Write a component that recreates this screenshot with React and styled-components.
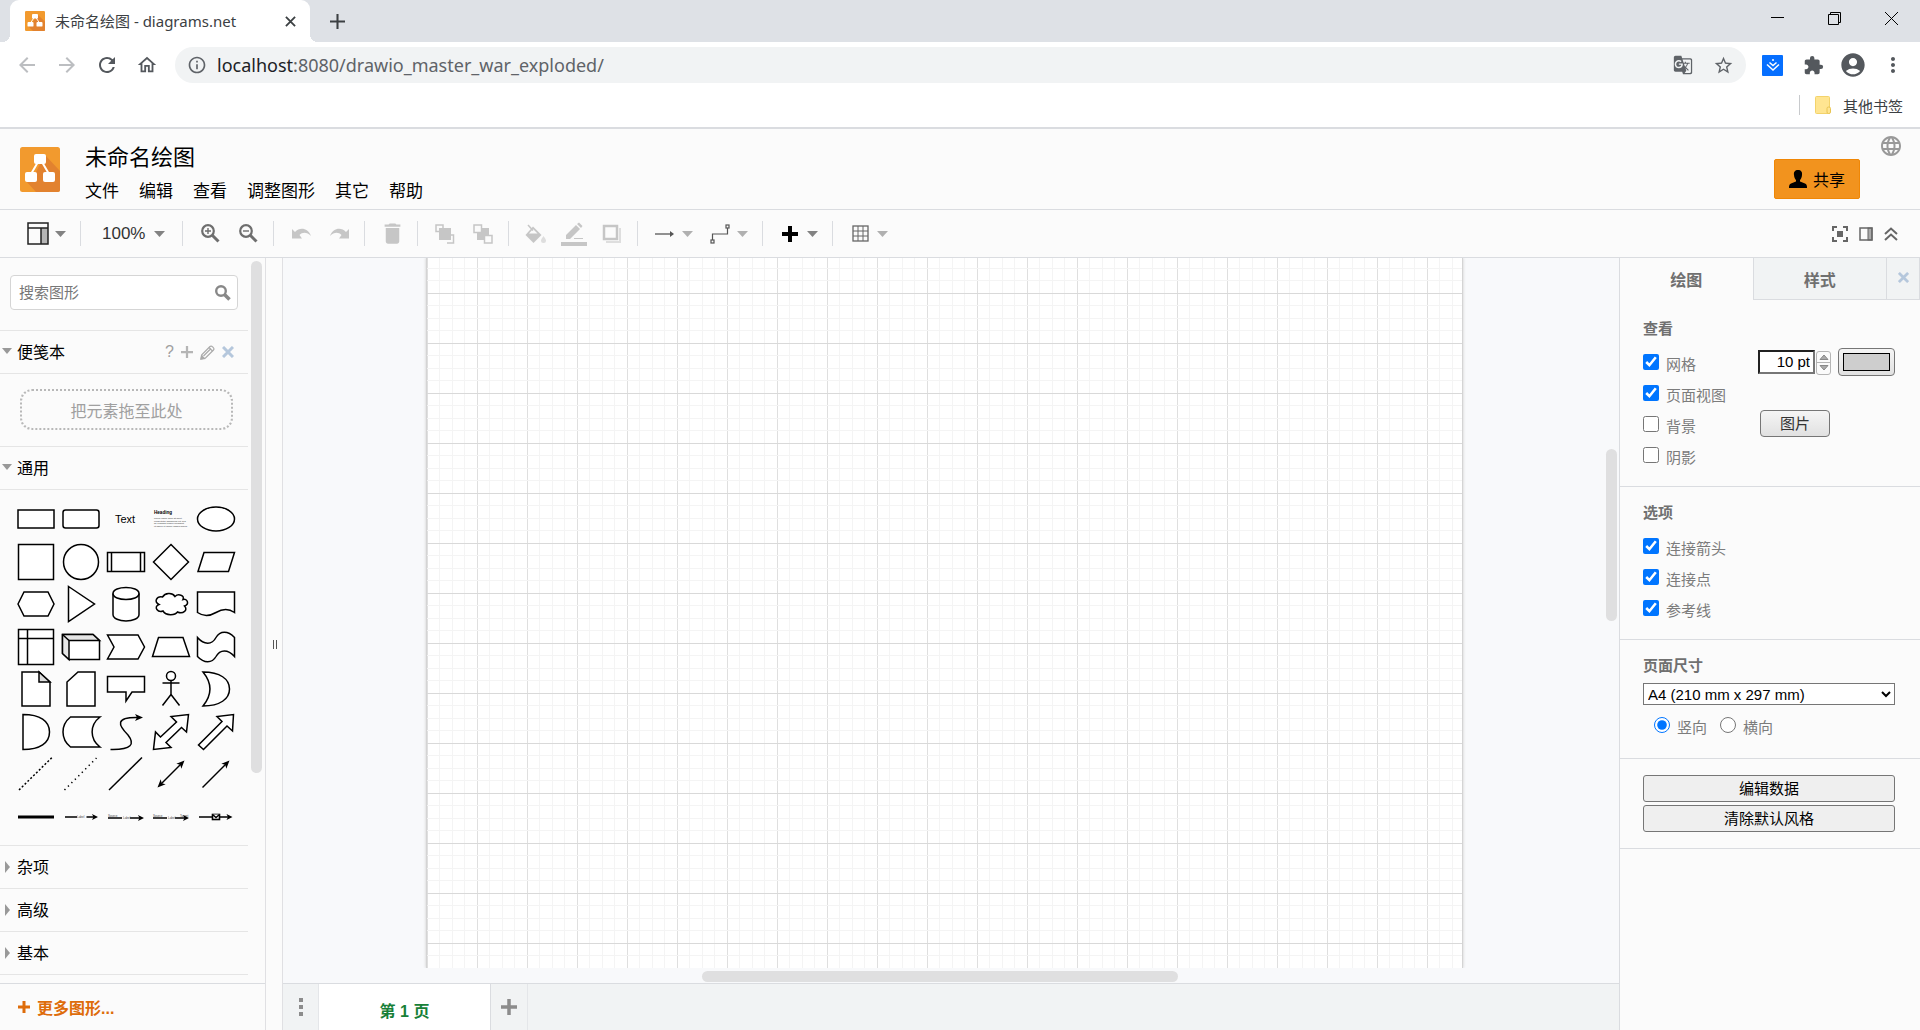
import React from "react";
import styled, { createGlobalStyle, css } from "styled-components";
import {
  MdAccountCircle,
  MdArrowBack,
  MdArrowForward,
  MdDelete,
  MdExtension,
  MdGTranslate,
  MdInfoOutline,
  MdLanguage,
  MdMoreVert,
  MdOutlineHome,
  MdRefresh,
  MdStarBorder,
} from "react-icons/md";

const GlobalStyle = createGlobalStyle`
  * {
    box-sizing: border-box;
  }

  body {
    margin: 0;
    font-family: "Liberation Sans", "Noto Sans CJK SC", sans-serif;
    font-size: 15px;
    color: #000;
  }

  button, input, select {
    font-family: inherit;
    margin: 0;
  }

  button {
    padding: 0;
    border: none;
    background: none;
    color: inherit;
  }
`;

const menus = ["文件", "编辑", "查看", "调整图形", "其它", "帮助"];

const viewOptions = [
  { id: "grid", label: "网格", checked: true },
  { id: "pageView", label: "页面视图", checked: true },
  { id: "background", label: "背景", checked: false },
  { id: "shadow", label: "阴影", checked: false },
];

const options = [
  { id: "arrows", label: "连接箭头" },
  { id: "points", label: "连接点" },
  { id: "guides", label: "参考线" },
];

const Head = ({ x, y, angle = 0 }) => (
  <path
    d="M0 0L-8 -3.5L-6 0L-8 3.5Z"
    transform={`translate(${x} ${y}) rotate(${angle})`}
    fill="#000"
    stroke="none"
  />
);

const SmallHead = ({ x, y, angle = 0 }) => (
  <path
    d="M0 0L-6 -3L-4.5 0L-6 3Z"
    transform={`translate(${x} ${y}) rotate(${angle})`}
    fill="#000"
    stroke="none"
  />
);

const Tiny = ({ x, y, children }) => (
  <text x={x} y={y} fontSize="3" fill="#444" stroke="none">
    {children}
  </text>
);

// every shape is drawn around 0,0 in a 44x42 cell
const shapes = [
  { name: "rectangle", art: <rect x="-18" y="-9" width="36" height="18" /> },
  { name: "rounded", art: <rect x="-18" y="-9" width="36" height="18" rx="2.5" /> },
  {
    name: "text",
    art: (
      <text x="-1" y="4" fontSize="11" textAnchor="middle" fill="#000" stroke="none">
        Text
      </text>
    ),
  },
  {
    name: "textbox",
    art: (
      <g stroke="none" fill="#000">
        <text x="-17" y="-5" fontSize="4.6" fontWeight="bold">Heading</text>
        <g fontSize="2.3" fill="#333">
          <text x="-17" y="0">Lorem ipsum dolor sit amet,</text>
          <text x="-17" y="2.7">consectetur adipisicing elit, sed</text>
          <text x="-17" y="5.4">do eiusmod tempor incididunt</text>
          <text x="-17" y="8.1">ut labore et dolore magna aliqua.</text>
        </g>
      </g>
    ),
  },
  { name: "ellipse", art: <ellipse rx="18.5" ry="12" /> },
  { name: "square", art: <rect x="-17.5" y="-17.5" width="35" height="35" /> },
  { name: "circle", art: <circle r="17.5" /> },
  {
    name: "process",
    art: (
      <>
        <rect x="-18.5" y="-9.5" width="37" height="19" />
        <path d="M-14.5 -9.5V9.5M14.5 -9.5V9.5" />
      </>
    ),
  },
  { name: "diamond", art: <path d="M0 -17.5L17.5 0L0 17.5L-17.5 0Z" /> },
  { name: "parallelogram", art: <path d="M-18 9.5L-12 -9.5H18.5L12.5 9.5Z" /> },
  { name: "hexagon", art: <path d="M-18 0L-12 -12H12L18 0L12 12H-12Z" /> },
  { name: "triangle", art: <path d="M-12.5 -17.5L13.5 0L-12.5 17.5Z" /> },
  {
    name: "cylinder",
    art: (
      <>
        <path d="M-13 -10.5V10.5C-13 19 13 19 13 10.5V-10.5C13 -18.5 -13 -18.5 -13 -10.5Z" />
        <path d="M-13 -10.5C-13 -2.5 13 -2.5 13 -10.5" fill="none" />
      </>
    ),
  },
  {
    name: "cloud",
    art: (
      <path d="M-8.5 -7C-14.5 -8 -17.5 -2 -12 0.5C-18 3 -13 9 -8 7C-5 12 4 11.5 6.5 8C12 10.5 17.5 6 13.5 2C19 0 16 -6 12 -4.5C14 -9 7 -10.5 4 -7.5C1 -12 -6 -11 -8.5 -7Z" />
    ),
  },
  {
    name: "document",
    art: <path d="M-18.5 -12H18.5V8.5C12 4 6 5 0 8.500C-6 12 -12 13 -18.5 8.5Z" />,
  },
  {
    name: "internal storage",
    art: (
      <>
        <rect x="-17.5" y="-17.5" width="35" height="35" />
        <path d="M-8.5 -17.5V17.5M-17.5 -8.5H17.5" />
      </>
    ),
  },
  {
    name: "cube",
    art: (
      <>
        <path d="M-18.5 -12.5H12L18.5 -6.5V12.5H-12L-18.5 6.5Z" />
        <path d="M-18.5 -12.5H12L18.5 -6.5H-12V12.5L-18.5 6.5Z" fill="#e6e6e6" />
        <path d="M-18.5 -12.5L-12 -6.5" />
      </>
    ),
  },
  { name: "step", art: <path d="M-18.5 -12H12L18.5 0L12 12H-18.5L-12 0Z" /> },
  { name: "trapezoid", art: <path d="M-18.5 9.5L-12.5 -9.5H12L18.5 9.5Z" /> },
  {
    name: "tape",
    art: (
      <path d="M-18.5 -9.5C-12 -2 -4 -2 0 -9.5C4 -16.5 12 -16.5 18.5 -9.5V9.5C12 2 4 2 0 9.5C-4 16.5 -12 16.5 -18.5 9.5Z" />
    ),
  },
  {
    name: "note",
    art: (
      <>
        <path d="M-14 -17H3L14 -7V17H-14Z" />
        <path d="M3 -17V-7H14Z" fill="#ddd" />
      </>
    ),
  },
  { name: "card", art: <path d="M-3 -17H14V17H-14V-7Z" /> },
  { name: "callout", art: <path d="M-18.5 -12.5H18.5V3H6L0 12V3H-18.5Z" /> },
  {
    name: "actor",
    art: (
      <>
        <circle cy="-13" r="4.5" />
        <path d="M0 -8.5V5.5M-8.5 -6H8.5M0 5.5L-8.5 16.5M0 5.5L8.5 16.5" />
      </>
    ),
  },
  {
    name: "or",
    art: <path d="M-13 -17C4 -17 13.5 -10 13.5 0C13.5 10 4 17 -13 17C-4 6 -4 -6 -13 -17Z" />,
  },
  { name: "and", art: <path d="M-13 -17.5C4 -17.5 13.5 -11 13.5 0C13.5 11 4 17.5 -13 17.5Z" /> },
  {
    name: "data storage",
    art: <path d="M-10.5 -15H19C8.5 -7 8.5 7 19 15H-10.5C-20.5 7 -20.5 -7 -10.5 -15Z" />,
  },
  {
    name: "curve",
    art: (
      <>
        <path d="M-15.5 17.5C6 18 9 12 2 3C-8 -7 -11 -15 12 -14.5" fill="none" />
        <Head x={17} y={-14.5} />
      </>
    ),
  },
  {
    name: "bidirectional arrow",
    art: (
      <path d="M17.5 -17.5L15.5 0L10.5 -4.5L-5 10.5L0 15.5L-17.5 17.5L-15.5 0L-10.5 5L5.5 -10L0 -15.5Z" />
    ),
  },
  {
    name: "arrow",
    art: <path d="M17.5 -17.5L16.5 -1L11 -6L-12.5 17.5L-17.5 13L6 -10.5L1 -15.5Z" />,
  },
  { name: "dashed line", art: <path d="M-17 16L16 -16.5" strokeDasharray="2 2" /> },
  { name: "dotted line", art: <path d="M-16.5 16L15.5 -16" strokeDasharray="1.3 3.6" /> },
  { name: "line", art: <path d="M-17 16L16 -16.5" /> },
  {
    name: "bidirectional connector",
    art: (
      <>
        <path d="M-10 10L10 -10" />
        <Head x={13.5} y={-13.5} angle={-45} />
        <Head x={-13.5} y={13.5} angle={135} />
      </>
    ),
  },
  {
    name: "directional connector",
    art: (
      <>
        <path d="M-13.5 13.5L10 -10" />
        <Head x={13.5} y={-13.5} angle={-45} />
      </>
    ),
  },
  { name: "link", art: <path d="M-18 0H18" strokeWidth="3" /> },
  {
    name: "connector with label",
    art: (
      <>
        <path d="M-16 0H-4M5.5 0H13" />
        <Tiny x={-4} y={1}>Label</Tiny>
        <SmallHead x={17} y={0} />
      </>
    ),
  },
  {
    name: "connector with 2 labels",
    art: (
      <>
        <path d="M-18 1H-4M4 1H14" />
        <Tiny x={-18} y={0}>Source</Tiny>
        <Tiny x={-3} y={2}>Label</Tiny>
        <SmallHead x={18} y={1} />
      </>
    ),
  },
  {
    name: "connector with 3 labels",
    art: (
      <>
        <path d="M-18 1H-4M4 1H14" />
        <Tiny x={-18} y={0}>Source</Tiny>
        <Tiny x={-3} y={2}>Label</Tiny>
        <Tiny x={9} y={0}>Target</Tiny>
        <SmallHead x={18} y={1} />
      </>
    ),
  },
  {
    name: "connector with symbol",
    art: (
      <>
        <path d="M-17 0H-4M4 0H13" />
        <rect x="-3.5" y="-2.5" width="7" height="5" strokeWidth="1.6" />
        <path d="M-3.5 -2.5L0 0.5L3.5 -2.5" />
        <SmallHead x={16.5} y={0} />
      </>
    ),
  },
];

const Logo = ({ width, height }) => (
  <svg width={width} height={height} viewBox="0 0 40 45" preserveAspectRatio="none">
    <rect width="40" height="45" rx="2.5" fill="#f29a2e" />
    <path d="M25 8L40 24V42.500A2.500 2.500 0 0 1 37.500 45H16L6 34L16 25L20 17Z" fill="#e2822f" />
    <path d="M18 15L11 27M22 15L29 27" stroke="#fff" strokeWidth="2" />
    <rect x="14" y="7" width="12" height="10" rx="2" fill="#fff" />
    <rect x="5" y="25" width="12" height="10" rx="2" fill="#fff" />
    <rect x="23" y="25" width="12" height="10" rx="2" fill="#fff" />
  </svg>
);

const Caret = ({ color = "#828282" }) => (
  <svg width="11" height="6" viewBox="0 0 11 6">
    <path d="M0 0H11L5.5 6Z" fill={color} />
  </svg>
);

const FormatIcon = () => (
  <svg width="22" height="23" viewBox="0 0 22 23" fill="none" stroke="#222">
    <rect x="14" y="6" width="7" height="16" fill="#b5b5b5" stroke="none" />
    <rect x="1" y="1" width="20" height="21" strokeWidth="1.5" />
    <path d="M1 6H21M14 6V22" strokeWidth="1.5" />
  </svg>
);

const ZoomIcon = ({ plus }) => (
  <svg width="19" height="19" viewBox="0 0 19 19" fill="none" stroke="#6e6e6e">
    <circle cx="7" cy="7" r="5.800" strokeWidth="2.200" />
    <path d="M11 11L17.500 17.500" strokeWidth="3" />
    <path d={plus ? "M4 7H10M7 4V10" : "M4 7H10"} strokeWidth="1.400" />
  </svg>
);

const UndoIcon = () => (
  <svg width="19" height="11" viewBox="0 0 19 11" fill="#c6c6c6">
    <path d="M0 1L3 4C8 -1.500 16 0 19 8C15 4 10.500 4 7.500 7L10 10.500H0Z" />
  </svg>
);

const RedoIcon = () => (
  <svg width="19" height="11" viewBox="0 0 19 11" fill="#c6c6c6">
    <path d="M19 1L16 4C11 -1.500 3 0 0 8C4 4 8.500 4 11.500 7L9 10.500H19Z" />
  </svg>
);

const FrontIcon = () => (
  <svg width="20" height="20" viewBox="0 0 20 20" fill="none" stroke="#c6c6c6" strokeWidth="1.5">
    <path d="M4 7.500H1V1H8V4M12 19H18.500V11H16" />
    <rect x="4" y="4" width="12" height="12" fill="#c6c6c6" stroke="none" />
  </svg>
);

const BackIcon = () => (
  <svg width="20" height="20" viewBox="0 0 20 20" strokeWidth="1.5">
    <rect x="4" y="4" width="12" height="12" fill="#c6c6c6" />
    <rect x="1" y="1" width="7.500" height="7.500" fill="#fbfbfb" stroke="#c6c6c6" />
    <rect x="11.500" y="11.500" width="7.500" height="7.500" fill="#fbfbfb" stroke="#c6c6c6" />
  </svg>
);

const FillIcon = () => (
  <svg width="22" height="20" viewBox="0 0 22 20">
    <path d="M8 2.500L16.500 11L8.500 19L0.500 11Z" fill="#c6c6c6" />
    <path d="M8 5L4 9.500H12.500Z" fill="#fbfbfb" />
    <path d="M3 1L8 6.500" stroke="#c6c6c6" strokeWidth="1.500" />
    <path d="M18.500 12C20 14.500 21 15.500 21 16.500A2.500 2.500 0 0 1 16 16.500C16 15.500 17 14.500 18.500 12Z" fill="#dedede" />
  </svg>
);

const StrokeIcon = () => (
  <svg width="26" height="24" viewBox="0 0 26 24" fill="#c6c6c6">
    <path d="M5 17V13L15 3L19 7L9 17ZM16 2L18 0.500L21.500 4L20 6Z" />
    <rect x="13" y="16" width="9" height="1" />
    <rect y="20" width="26" height="4" />
  </svg>
);

const ShadowIcon = () => (
  <svg width="20" height="20" viewBox="0 0 20 20">
    <path d="M4 17H17V4H19V19H4Z" fill="#dedede" />
    <rect x="2" y="2" width="13" height="13" fill="#fbfbfb" stroke="#c6c6c6" strokeWidth="2.500" />
  </svg>
);

const ArrowIcon = () => (
  <svg width="20" height="8" viewBox="0 0 20 8">
    <path d="M0 4H16" stroke="#555" strokeWidth="1.300" />
    <path d="M15 1L19 4L15 7Z" fill="#555" />
  </svg>
);

const WaypointIcon = () => (
  <svg width="20" height="20" viewBox="0 0 20 20" fill="none" stroke="#555" strokeWidth="1.200">
    <path d="M2.500 16V10H17.500V4" />
    <rect x="1" y="16" width="3" height="3" />
    <rect x="16" y="1" width="3" height="3" />
  </svg>
);

const TableIcon = () => (
  <svg width="17" height="17" viewBox="0 0 17 17" fill="none" stroke="#666">
    <rect x="1" y="1" width="15" height="15" strokeWidth="1.300" />
    <path d="M1 6H16M1 11H16M6 1V16M11 1V16" />
  </svg>
);

const PlusIcon = ({ size, color, thick = 4 }) => (
  <svg width={size} height={size} viewBox="0 0 16 16">
    <path d="M8 0V16M0 8H16" stroke={color} strokeWidth={thick} />
  </svg>
);

const CrossIcon = ({ size, color = "#b5c7dc", thick = 3 }) => (
  <svg width={size} height={size} viewBox="0 0 12 12">
    <path d="M1 1L11 11M11 1L1 11" stroke={color} strokeWidth={thick} />
  </svg>
);

const SearchIcon = () => (
  <svg width="16" height="16" viewBox="0 0 16 16" fill="none" stroke="#888">
    <circle cx="6" cy="6" r="4.800" strokeWidth="2.400" />
    <path d="M9.500 9.500L14.500 14.500" strokeWidth="3.500" />
  </svg>
);

const PencilIcon = () => (
  <svg width="15" height="15" viewBox="0 0 15 15" fill="none" stroke="#aaa" strokeWidth="1.200">
    <path d="M1 14L2 9.500L10 1.500C11.500 0 15 3.500 13.500 5L5.500 13Z" />
    <path d="M3.500 11L11 3.500M9 2.500L12.500 6" />
    <path d="M1 14L1.500 10.500L4.500 13.500Z" fill="#aaa" />
  </svg>
);

const UserIcon = () => (
  <svg width="18" height="18" viewBox="0 0 18 18">
    <path d="M9 0C12 0 13.500 2 13 5C12.800 7.500 12 9 11 10V11.500L16 13.500C18 14.500 18 16 18 18H0C0 16 0 14.500 2 13.500L7 11.500V10C6 9 5.200 7.500 5 5C4.500 2 6 0 9 0Z" />
  </svg>
);

const FullscreenIcon = () => (
  <svg width="16" height="16" viewBox="0 0 16 16" fill="none" stroke="#666" strokeWidth="2">
    <path d="M1 5V1H5M11 1H15V5M15 11V15H11M5 15H1V11" />
    <rect x="5" y="5" width="6" height="6" fill="#666" stroke="none" />
  </svg>
);

const PanelIcon = () => (
  <svg width="14" height="14" viewBox="0 0 14 14" fill="none" stroke="#666">
    <rect x="9" y="1" width="4" height="12" fill="#aaa" />
    <rect x="1" y="1" width="12" height="12" strokeWidth="1.500" />
  </svg>
);

const CollapseIcon = () => (
  <svg width="14" height="14" viewBox="0 0 14 14" fill="none" stroke="#666" strokeWidth="2">
    <path d="M1 7L7 1.500L13 7M1 13L7 7.500L13 13" />
  </svg>
);

const BrowserChrome = () => (
  <header>
    <TabStrip>
      <BrowserTab>
        <Logo width={20} height={20} />
        <TabTitle>未命名绘图 - diagrams.net</TabTitle>
        <ChromeButton aria-label="关闭标签页" $size={16}>
          <CrossIcon size={11} color="#3c4043" thick={2} />
        </ChromeButton>
      </BrowserTab>
      <ChromeButton aria-label="新标签页" $size={32}>
        <PlusIcon size={15} color="#3c4043" thick={2.2} />
      </ChromeButton>
      <WindowControls>
        <ChromeButton aria-label="最小化" $size={16}>
          <svg width="13" height="13"><path d="M0 5.5H13" stroke="#000" /></svg>
        </ChromeButton>
        <ChromeButton aria-label="还原" $size={16}>
          <svg width="13" height="13" fill="none" stroke="#000">
            <path d="M0.5 2.5H10.500V12.500H0.500ZM2.500 2.500V0.500H12.500V10.500H10.500" />
          </svg>
        </ChromeButton>
        <ChromeButton aria-label="关闭" $size={16}>
          <svg width="13" height="13"><path d="M0 0L13 13M13 0L0 13" stroke="#000" /></svg>
        </ChromeButton>
      </WindowControls>
    </TabStrip>
    <AddressRow>
      <ChromeButton aria-label="后退" $size={24} $dim><MdArrowBack size={24} /></ChromeButton>
      <ChromeButton aria-label="前进" $size={24} $dim><MdArrowForward size={24} /></ChromeButton>
      <ChromeButton aria-label="刷新" $size={24}><MdRefresh size={24} /></ChromeButton>
      <ChromeButton aria-label="主页" $size={24}><MdOutlineHome size={22} /></ChromeButton>
      <AddressBar>
        <MdInfoOutline size={20} />
        <Url>
          <b>localhost</b>:8080/drawio_master_war_exploded/
        </Url>
        <MdGTranslate size={20} />
        <MdStarBorder size={21} />
      </AddressBar>
      <Extension aria-label="扩展">
        <svg width="14" height="12" viewBox="0 0 14 12" fill="none" stroke="#fff" strokeWidth="1.500">
          <path d="M1 5.500L7 11L13 5.500M3.500 3.500L7 6.500L10.500 3.500" />
          <circle cx="7" cy="1" r="1" fill="#fff" stroke="none" />
        </svg>
      </Extension>
      <ChromeButton aria-label="扩展程序" $size={24}><MdExtension size={21} /></ChromeButton>
      <ChromeButton aria-label="用户" $size={24}><MdAccountCircle size={28} /></ChromeButton>
      <ChromeButton aria-label="更多" $size={24}><MdMoreVert size={24} /></ChromeButton>
    </AddressRow>
    <BookmarkRow>
      <Bookmark>
        <svg width="16" height="18" viewBox="0 0 16 18">
          <rect x="0.500" y="0.500" width="14" height="17" rx="1" fill="#ffe591" stroke="#f3d36b" />
          <rect x="12" y="11" width="3.500" height="6.500" rx="1.500" fill="#ffe591" stroke="#e8c453" />
        </svg>
        其他书签
      </Bookmark>
    </BookmarkRow>
  </header>
);

const Toolbar = () => (
  <ToolbarRow>
    <MenuTool aria-label="视图"><ToolIcon><FormatIcon /></ToolIcon><Caret /></MenuTool>
    <Separator />
    <ZoomTool>100%<Caret /></ZoomTool>
    <Separator />
    <ToolGroup>
      <ToolButton aria-label="放大"><ZoomIcon plus /></ToolButton>
      <ToolButton aria-label="缩小"><ZoomIcon /></ToolButton>
    </ToolGroup>
    <Separator />
    <ToolGroup>
      <ToolButton aria-label="撤销"><UndoIcon /></ToolButton>
      <ToolButton aria-label="重做"><RedoIcon /></ToolButton>
    </ToolGroup>
    <Separator />
    <ToolButton aria-label="删除"><MdDelete size={27} /></ToolButton>
    <Separator />
    <ToolGroup>
      <ToolButton aria-label="移至最前"><FrontIcon /></ToolButton>
      <ToolButton aria-label="移至最后"><BackIcon /></ToolButton>
    </ToolGroup>
    <Separator />
    <ToolGroup>
      <ToolButton aria-label="填充颜色"><FillIcon /></ToolButton>
      <ToolButton aria-label="线条颜色"><StrokeIcon /></ToolButton>
      <ToolButton aria-label="阴影"><ShadowIcon /></ToolButton>
    </ToolGroup>
    <Separator />
    <ToolGroup>
      <MenuTool aria-label="连接"><ToolIcon><ArrowIcon /></ToolIcon><Caret color="#b0b0b0" /></MenuTool>
      <MenuTool aria-label="航点"><ToolIcon><WaypointIcon /></ToolIcon><Caret color="#b0b0b0" /></MenuTool>
    </ToolGroup>
    <Separator />
    <MenuTool aria-label="插入"><ToolIcon><PlusIcon size={16} color="#000" /></ToolIcon><Caret /></MenuTool>
    <Separator />
    <MenuTool aria-label="表格"><ToolIcon><TableIcon /></ToolIcon><Caret color="#b0b0b0" /></MenuTool>
    <ToolbarEnd>
      <button aria-label="全屏"><FullscreenIcon /></button>
      <button aria-label="格式面板"><PanelIcon /></button>
      <button aria-label="折叠"><CollapseIcon /></button>
    </ToolbarEnd>
  </ToolbarRow>
);

const SectionTitle = ({ title, open, children }) => (
  <SectionBar>
    <SectionToggle aria-expanded={!!open}>
      <Triangle $open={open} />
      {title}
    </SectionToggle>
    {children}
  </SectionBar>
);

const ShapeSidebar = () => (
  <Sidebar>
    <SidebarScroll>
      <SidebarContent>
        <SearchBox>
          <SearchInput placeholder="搜索图形" aria-label="搜索图形" />
          <SearchIcon />
        </SearchBox>
        <SectionTitle title="便笺本" open>
          <ScratchActions>
            <button aria-label="帮助">?</button>
            <button aria-label="添加"><PlusIcon size={12} color="#b5b5b5" thick={3} /></button>
            <button aria-label="编辑"><PencilIcon /></button>
            <button aria-label="关闭"><CrossIcon size={12} /></button>
          </ScratchActions>
        </SectionTitle>
        <ScratchBody>
          <DropArea>把元素拖至此处</DropArea>
        </ScratchBody>
        <SectionTitle title="通用" open />
        <ShapeGrid>
          {shapes.map(({ name, art }) => (
            <ShapeButton key={name} aria-label={name}>
              <svg width="44" height="42" viewBox="-22 -21 44 42" fill="#fff" stroke="#000" strokeWidth="1.5">
                {art}
              </svg>
            </ShapeButton>
          ))}
        </ShapeGrid>
        <SectionTitle title="杂项" />
        <SectionTitle title="高级" />
        <SectionTitle title="基本" />
      </SidebarContent>
      <VerticalTrack>
        <Space $grow={3} />
        <Thumb $grow={512} />
        <Space $grow={210} />
      </VerticalTrack>
    </SidebarScroll>
    <MoreShapes>
      <PlusIcon size={12} color="#de6c0a" thick={4} />
      更多图形...
    </MoreShapes>
  </Sidebar>
);

const Canvas = () => (
  <CanvasArea>
    <CanvasView>
      <Viewport><Page /></Viewport>
      <VerticalTrack>
        <Space $grow={191} />
        <Thumb $grow={172} />
        <Space $grow={347} />
      </VerticalTrack>
    </CanvasView>
    <HorizontalTrack>
      <Space $grow={419} />
      <Thumb $grow={476} />
      <Space $grow={428} />
    </HorizontalTrack>
    <PageTabs>
      <PageTabButton aria-label="页面" $width={36}>
        <svg width="4" height="18" fill="#8c8c8c">
          <rect width="4" height="4" />
          <rect y="7" width="4" height="4" />
          <rect y="14" width="4" height="4" />
        </svg>
      </PageTabButton>
      <ActivePage>第 1 页</ActivePage>
      <PageTabButton aria-label="插入页面" $width={37}>
        <PlusIcon size={16} color="#8c8c8c" thick={3.5} />
      </PageTabButton>
    </PageTabs>
  </CanvasArea>
);

const Check = ({ id, label, checked = true, children }) => (
  <CheckRow>
    <CheckLabel>
      <input type="checkbox" id={id} defaultChecked={checked} />
      <span>{label}</span>
    </CheckLabel>
    {children}
  </CheckRow>
);

const FormatPanel = () => (
  <Panel>
    <PanelTabs>
      <PanelTab $active>绘图</PanelTab>
      <PanelTab>样式</PanelTab>
      <PanelClose aria-label="关闭"><CrossIcon size={11} /></PanelClose>
    </PanelTabs>
    <PanelSection>
      <PanelHeading>查看</PanelHeading>
      {viewOptions.map((el) => (
        <Check key={el.id} {...el}>
          {el.id === "grid" && (
            <>
              <SizeInput defaultValue="10 pt" aria-label="网格大小" />
              <Spinner>
                <button aria-label="增加">
                  <svg width="10" height="6"><path d="M1 5.500L5 1L9 5.500Z" fill="#aaa" stroke="#888" /></svg>
                </button>
                <button aria-label="减少">
                  <svg width="10" height="6"><path d="M1 0.500L5 5L9 0.500Z" fill="#aaa" stroke="#888" /></svg>
                </button>
              </Spinner>
              <ColorButton aria-label="网格颜色"><Swatch /></ColorButton>
            </>
          )}
          {el.id === "background" && <ImageButton>图片</ImageButton>}
        </Check>
      ))}
    </PanelSection>
    <PanelSection>
      <PanelHeading>选项</PanelHeading>
      {options.map((el) => (
        <Check key={el.id} {...el} />
      ))}
    </PanelSection>
    <PanelSection>
      <PanelHeading>页面尺寸</PanelHeading>
      <SizeSelect aria-label="页面尺寸">
        <option>A4 (210 mm x 297 mm)</option>
      </SizeSelect>
      <Orientation>
        <CheckLabel>
          <input type="radio" name="orientation" defaultChecked />
          <span>竖向</span>
        </CheckLabel>
        <CheckLabel>
          <input type="radio" name="orientation" />
          <span>横向</span>
        </CheckLabel>
      </Orientation>
    </PanelSection>
    <PanelSection>
      <WideButton>编辑数据</WideButton>
      <WideButton>清除默认风格</WideButton>
    </PanelSection>
  </Panel>
);

const App = () => (
  <Screen>
    <GlobalStyle />
    <BrowserChrome />
    <AppHeader>
      <Logo width={40} height={45} />
      <TitleBlock>
        <FileName>未命名绘图</FileName>
        <MenuBar>
          {menus.map((el) => (
            <MenuItem key={el}>{el}</MenuItem>
          ))}
        </MenuBar>
      </TitleBlock>
      <ShareButton><UserIcon />共享</ShareButton>
      <LanguageButton aria-label="语言"><MdLanguage size={24} /></LanguageButton>
    </AppHeader>
    <Toolbar />
    <Main>
      <ShapeSidebar />
      <Splitter>
        <svg width="4" height="9"><path d="M0.5 0V9M3.500 0V9" stroke="#555" /></svg>
      </Splitter>
      <Canvas />
      <FormatPanel />
    </Main>
  </Screen>
);

export default App;

const Screen = styled.div`
  display: flex;
  flex-direction: column;
  height: 100vh;
  overflow: hidden;
  background: #fbfbfb;
`;

const TabStrip = styled.div`
  display: flex;
  align-items: center;
  height: 42px;
  padding-left: 10px;
  background: #dee1e6;
  color: #3c4043;
`;

const BrowserTab = styled.div`
  position: relative;
  display: flex;
  align-items: center;
  align-self: stretch;
  gap: 10px;
  width: 300px;
  margin-right: 11px;
  padding: 0 12px 0 15px;
  border-radius: 9px 9px 0 0;
  background: #fff;

  /* flared feet on both sides of the tab */
  &::before,
  &::after {
    content: "";
    position: absolute;
    bottom: 0;
    width: 8px;
    height: 8px;
  }

  &::before {
    right: 100%;
    background: radial-gradient(circle at 0 0, transparent 8px, #fff 8px);
  }

  &::after {
    left: 100%;
    background: radial-gradient(circle at 100% 0, transparent 8px, #fff 8px);
  }
`;

const TabTitle = styled.span`
  flex: 1;
  font-family: "Noto Sans", "Noto Sans CJK SC", sans-serif;
  font-size: 15px;
  line-height: 20px;
  white-space: nowrap;
`;

const ChromeButton = styled.button`
  display: flex;
  align-items: center;
  justify-content: center;
  flex: none;
  width: ${({ $size }) => $size}px;
  height: ${({ $size }) => $size}px;
  color: ${({ $dim }) => ($dim ? "#bcbec1" : "#54585d")};

  svg {
    flex: none;
  }
`;

const WindowControls = styled.div`
  display: flex;
  gap: 41px;
  margin: 0 21px 6px auto;
`;

const AddressRow = styled.div`
  display: flex;
  align-items: center;
  gap: 16px;
  height: 46px;
  padding: 0 15px;
  background: #fff;
`;

const AddressBar = styled.div`
  display: flex;
  align-items: center;
  gap: 20px;
  flex: 1;
  height: 36px;
  padding: 0 12px;
  border-radius: 18px;
  background: #f1f3f4;
  color: #5f6368;
`;

const Url = styled.span`
  flex: 1;
  margin-left: -10px;
  font-family: "Noto Sans", sans-serif;
  font-size: 18px;
  line-height: 24px;
  white-space: nowrap;

  b {
    font-weight: normal;
    color: #202124;
  }
`;

const Extension = styled.button`
  display: flex;
  align-items: center;
  justify-content: center;
  width: 21px;
  height: 21px;
  margin-right: 2px;
  border-radius: 1px;
  background: #066fff;
`;

const BookmarkRow = styled.div`
  display: flex;
  align-items: center;
  justify-content: flex-end;
  height: 41px;
  padding: 0 17px 5px 0;
  border-bottom: 2px solid #dadce0;
  background: #fff;
`;

const Bookmark = styled.button`
  display: flex;
  align-items: center;
  gap: 12px;
  height: 20px;
  padding-left: 15px;
  border-left: 1px solid #c8cacd;
  font-size: 15px;
  color: #3c4043;
`;

const AppHeader = styled.div`
  display: flex;
  align-items: flex-start;
  flex: none;
  height: 81px;
  padding: 7px 17px 0 20px;
  border-bottom: 1px solid #dadce0;

  > svg {
    margin-top: 11px;
  }
`;

const TitleBlock = styled.div`
  margin-left: 25px;
`;

const FileName = styled.div`
  padding-top: 6px;
  font-size: 22px;
  line-height: 32px;
`;

const MenuBar = styled.nav`
  display: flex;
  gap: 20px;
  padding-top: 6px;
`;

const MenuItem = styled.button`
  font-size: 17px;
  line-height: 24px;
`;

const ShareButton = styled.button`
  display: flex;
  align-items: center;
  justify-content: center;
  gap: 6px;
  width: 86px;
  height: 40px;
  margin: 23px 19px 0 auto;
  border: 1px solid #f08705;
  border-radius: 2px;
  background: #f2931e;
  font-size: 16px;
`;

const LanguageButton = styled.button`
  height: 24px;
  margin-top: -2px;
  color: #999;
`;

const ToolbarRow = styled.div`
  display: flex;
  align-items: center;
  flex: none;
  height: 48px;
  padding: 0 22px 0 26px;
  border-bottom: 1px solid #dadce0;
`;

const Separator = styled.span`
  flex: none;
  width: 1px;
  height: 25px;
  margin: 0 15px 0 13px;
  background: #dadce0;
`;

const ToolGroup = styled.div`
  display: flex;
  gap: 14px;
`;

const ToolButton = styled.button`
  display: flex;
  align-items: center;
  justify-content: center;
  width: 24px;
  height: 24px;
  color: #c6c6c6;

  svg {
    flex: none;
  }
`;

const ToolIcon = styled.span`
  display: flex;
  align-items: center;
  justify-content: center;
  width: 24px;
  height: 24px;
`;

const MenuTool = styled.button`
  display: flex;
  align-items: center;
  gap: 5px;
  padding-right: 1px;
`;

const ZoomTool = styled.button`
  display: flex;
  align-items: center;
  gap: 9px;
  width: 73px;
  padding-left: 6px;
  font-size: 17px;
  color: #333;
`;

const ToolbarEnd = styled.div`
  display: flex;
  align-items: center;
  gap: 11px;
  margin-left: auto;

  button {
    display: flex;
  }
`;

const Main = styled.main`
  display: flex;
  flex: 1;
  min-height: 0;
`;

const Sidebar = styled.aside`
  display: flex;
  flex-direction: column;
  flex: none;
  width: 266px;
  border-right: 1px solid #e0e0e3;
`;

const SidebarScroll = styled.div`
  display: flex;
  flex: 1;
  min-height: 0;
  overflow: hidden;
`;

const SidebarContent = styled.div`
  width: 248px;
`;

const SearchBox = styled.div`
  display: flex;
  align-items: center;
  height: 35px;
  margin: 17px 10px 20px;
  padding: 0 6px 0 8px;
  border: 1px solid #d5d5d5;
  border-radius: 4px;
  background: #fff;
`;

const SearchInput = styled.input`
  flex: 1;
  min-width: 0;
  padding: 0;
  border: none;
  outline: none;
  background: none;
  font-size: 15px;

  &::placeholder {
    color: #777;
  }
`;

const SectionBar = styled.div`
  display: flex;
  align-items: center;
  height: 44px;
  margin-bottom: -1px;
  border-top: 1px solid #e5e5e5;
  border-bottom: 1px solid #e5e5e5;
`;

const SectionToggle = styled.button`
  display: flex;
  align-items: center;
  flex: 1;
  padding-top: 2px;
  font-size: 16px;
  line-height: 24px;
`;

const Triangle = styled.span`
  width: 0;
  height: 0;
  border-style: solid;
  ${({ $open }) =>
    $open
      ? css`
          margin: 0 5px 4px 2px;
          border-width: 6px 5px 0;
          border-color: #999 transparent transparent;
        `
      : css`
          margin: 0 7px 2px 5px;
          border-width: 6px 0 6px 5px;
          border-color: transparent transparent transparent #999;
        `}
`;

const ScratchActions = styled.div`
  display: flex;
  align-items: center;
  gap: 7px;
  padding-right: 14px;
  color: #a0a0a0;

  button {
    display: flex;
    font-size: 16px;
  }
`;

const ScratchBody = styled.div`
  padding: 16px 15px 16px 20px;
`;

const DropArea = styled.div`
  display: flex;
  align-items: center;
  justify-content: center;
  height: 41px;
  border: 2px dotted #b8b8b8;
  border-radius: 12px;
  font-size: 16px;
  color: #a0a0a0;
`;

const ShapeGrid = styled.div`
  display: grid;
  grid-template-columns: repeat(5, 1fr);
  grid-template-rows: repeat(8, 1fr);
  height: 356px;
  padding: 9px 10px 7px 13px;
`;

const ShapeButton = styled.button`
  display: flex;
  align-items: center;
  justify-content: center;
  min-height: 0;
`;

const MoreShapes = styled.button`
  display: flex;
  align-items: center;
  gap: 7px;
  flex: none;
  height: 47px;
  padding-left: 18px;
  border-top: 1px solid #dadce0;
  font-size: 16px;
  font-weight: bold;
  color: #de6c0a;
`;

const Splitter = styled.div`
  display: flex;
  align-items: center;
  justify-content: center;
  flex: none;
  width: 17px;
  padding-left: 2px;
  border-right: 1px solid #e0e0e3;
`;

const CanvasArea = styled.section`
  display: flex;
  flex-direction: column;
  flex: 1;
  min-width: 0;
  background: #f8f9fb;
`;

const CanvasView = styled.div`
  display: flex;
  flex: 1;
  min-height: 0;
`;

const Viewport = styled.div`
  display: flex;
  justify-content: center;
  flex: 1;
  min-width: 0;
`;

// major lines every 50px, three fainter ones in between
const gridLines = (direction, major) =>
  `linear-gradient(${direction}, ${major} 1px, transparent 1px 12px, #f4f4f4 12px 13px, transparent 13px 25px, #f4f4f4 25px 26px, transparent 26px 37px, #f4f4f4 37px 38px, transparent 38px)`;

const Page = styled.div`
  flex: 0 1 1037px;
  border: solid #d4d4d4;
  border-width: 0 1px;
  background-color: #fff;
  background-image: ${gridLines("to bottom", "#d9d9d9")}, ${gridLines("to right", "#dfdfdf")};
  background-size: 50px 50px;
  background-position: 0 35px, 0 0;
  box-shadow: 0 0 3px #ccc;
  clip-path: inset(0 -4px);
`;

const VerticalTrack = styled.div`
  display: flex;
  flex-direction: column;
  flex: none;
  width: 17px;
  padding: 0 3px;

  ${Viewport} + & {
    width: 13px;
    padding: 0 2px 0 0;
  }
`;

const HorizontalTrack = styled.div`
  display: flex;
  flex: none;
  height: 15px;
  padding: 3px 13px 1px 0;
`;

const Space = styled.div`
  flex: ${({ $grow }) => $grow} 0 0;
`;

const Thumb = styled.div`
  flex: ${({ $grow }) => $grow} 0 0;
  border-radius: 6px;
  background: #dfdfe0;
`;

const PageTabs = styled.div`
  display: flex;
  flex: none;
  height: 47px;
  border-top: 1px solid #dadce0;
  background: #f1f3f4;
`;

const PageTabButton = styled.button`
  display: flex;
  align-items: center;
  justify-content: center;
  width: ${({ $width }) => $width}px;
  border-right: 1px solid #e4e6e9;
`;

const ActivePage = styled.button`
  width: 172px;
  padding-top: 6px;
  border-right: 1px solid #dadce0;
  background: #fff;
  font-size: 16px;
  font-weight: bold;
  color: #188038;
`;

const Panel = styled.aside`
  flex: none;
  width: 301px;
  border-left: 1px solid #dadce0;
  color: #707070;
`;

const PanelTabs = styled.div`
  display: flex;
  height: 42px;
  margin-bottom: 3px;
`;

const PanelTab = styled.button`
  flex: 1;
  font-size: 16px;
  font-weight: bold;
  color: #707070;

  ${({ $active }) =>
    !$active &&
    css`
      border: solid #dadce0;
      border-width: 0 0 1px 1px;
      background: #f1f3f4;
    `}
`;

const PanelClose = styled.button`
  width: 34px;
  border: solid #dadce0;
  border-width: 0 1px 1px;
  background: #f1f3f4;
`;

const PanelSection = styled.div`
  padding: 16px 25px 16px 23px;
  border-bottom: 1px solid #dadce0;
`;

const PanelHeading = styled.div`
  margin-bottom: 7px;
  font-size: 15px;
  font-weight: bold;
  line-height: 20px;
`;

const CheckRow = styled.div`
  display: flex;
  align-items: center;
  height: 31px;
`;

const CheckLabel = styled.label`
  display: flex;
  align-items: center;
  gap: 7px;
  color: #7c7c7c;

  input {
    width: 16px;
    height: 16px;
  }

  span {
    padding-top: 6px;
    line-height: 20px;
  }

  ${CheckRow} & {
    width: 115px;
  }
`;

const SizeInput = styled.input`
  width: 57px;
  height: 24px;
  padding: 0 3px 0 0;
  border: 2px inset #767676;
  background: #fff;
  font-size: 15px;
  text-align: right;
`;

const Spinner = styled.span`
  display: flex;
  flex-direction: column;
  width: 15px;
  height: 24px;
  margin: 2px 7px 0 1px;
  border: 1px solid #b5b5b5;
  border-radius: 3px;

  button {
    display: flex;
    align-items: center;
    justify-content: center;
    flex: 1;
  }

  button + button {
    border-top: 1px solid #b5b5b5;
  }
`;

const softButton = css`
  border: 1px solid #767676;
  border-radius: 4px;
  background: linear-gradient(#f5f5f5, #e1e1e1);
`;

const ColorButton = styled.button`
  ${softButton}
  flex: 1;
  height: 28px;
  padding: 4px;
`;

const Swatch = styled.span`
  display: block;
  height: 18px;
  border: 1px solid #000;
  background: #cecece;
`;

const ImageButton = styled.button`
  ${softButton}
  width: 70px;
  height: 27px;
  margin-left: 2px;
  font-size: 15px;
  line-height: 20px;
  color: #333;
`;

const SizeSelect = styled.select`
  display: block;
  width: 100%;
  height: 22px;
  padding: 0;
  border: 1px solid #767676;
  border-radius: 0;
  background-color: #fff;
  font-size: 15px;
`;

const Orientation = styled.div`
  display: flex;
  gap: 13px;
  padding: 7px 0 4px 11px;
`;

const WideButton = styled.button`
  display: block;
  width: 100%;
  height: 27px;
  border: 1px solid #767676;
  border-radius: 3px;
  background: #efefef;
  font-size: 15px;
  line-height: 20px;
  color: #000;

  & + & {
    margin-top: 3px;
  }
`;
